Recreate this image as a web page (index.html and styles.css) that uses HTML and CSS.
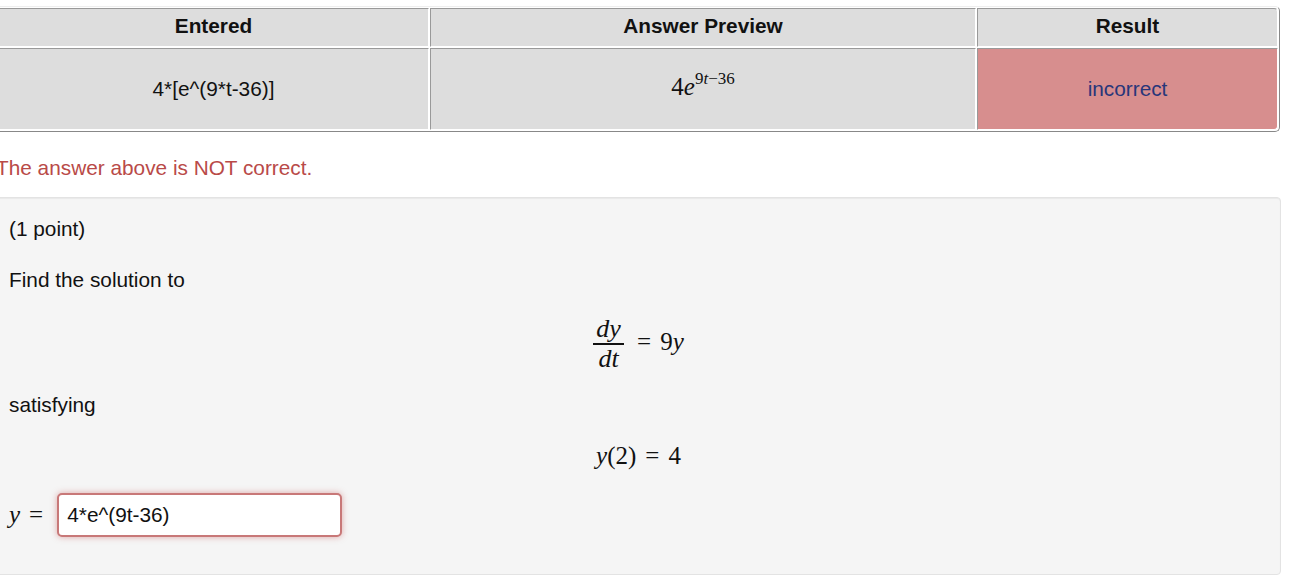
FILE: index.html
```html
<!DOCTYPE html>
<html lang="en">
<head>
	<meta charset="UTF-8">
	<title>Problem 4</title>
	<link rel="stylesheet" href="styles.css">
</head>
<body>
	<div class="page">
		<table class="attempt-results">
			<tr>
				<th class="col-entered">Entered</th>
				<th class="col-preview">Answer Preview</th>
				<th class="col-result">Result</th>
			</tr>
			<tr>
				<td>4*[e^(9*t-36)]</td>
				<td class="preview"><span class="math">4<i>e</i><sup>9<i>t</i>−36</sup></span></td>
				<td class="incorrect">incorrect</td>
			</tr>
		</table>

		<p class="error">The answer above is NOT correct.</p>

		<div class="problem">
			<p class="points">(1 point)</p>
			<p class="text">Find the solution to</p>
			<div class="display eq-first">
				<span class="math">
					<span class="frac"><span class="num"><i>dy</i></span><span class="den"><i>dt</i></span></span>
					<span class="rel">=</span>9<i>y</i>
				</span>
			</div>
			<p class="text after-eq">satisfying</p>
			<div class="display eq-second">
				<span class="math"><i>y</i>(2)<span class="rel">=</span>4</span>
			</div>
			<div class="answer-line">
				<span class="math"><i>y</i><span class="rel">=</span></span>
				<input type="text" class="answer" value="4*e^(9t-36)">
			</div>
		</div>
	</div>
</body>
</html>
```

FILE: styles.css
```css
body{margin:0;background:#fff;font-family:"Liberation Sans",Arial,sans-serif;font-size:20.8px;color:#111;}
.page{margin-left:-4px;width:1285px;padding-top:6px;}

/* results table */
.attempt-results{width:1284px;table-layout:fixed;border-collapse:separate;border-spacing:1px;border:1px solid;border-color:#eee #888 #888 #eee;border-radius:0 5px 5px 0;}
.attempt-results th,.attempt-results td{background:#ddd;text-align:center;border:1px solid;border-color:#999 #fff #fff #999;}
.attempt-results th{height:33px;padding:0 0 4px;font-weight:bold;}
.attempt-results td{height:80px;padding:0;}
.col-entered{width:429px;}
.col-preview{width:544px;}
.col-result{width:auto;}
.attempt-results td.incorrect{background:#d78e8e;color:#28367a;}
.attempt-results th.col-result{border-top-right-radius:4px;}
.attempt-results td.incorrect{border-bottom-right-radius:4px;}
.preview .math{position:relative;top:-2px;}

.error{margin:24px 0 0;line-height:24px;color:#b94a48;}

/* problem well */
.problem{margin-top:17px;background:#f5f5f5;border:1px solid #e3e3e3;border-radius:4px;box-shadow:inset 0 1px 1px rgba(0,0,0,.05);padding:19px 12px 37px 12px;}
.problem p{margin:0;line-height:24px;}
.points{margin:0;}
.text{margin-top:27px !important;}
.after-eq{margin-top:21px !important;}

.math{font-family:"Liberation Serif","Times New Roman",serif;font-size:25px;white-space:nowrap;}
.math i{font-style:italic;}
.math sup{font-size:17px;vertical-align:11px;line-height:0;}
.rel{margin:0 9px;}

.display{display:flex;justify-content:center;align-items:center;}
.eq-first{margin-top:24px;height:56px;}
.eq-second{margin-top:24px;height:30px;}

.frac{display:inline-flex;flex-direction:column;align-items:center;vertical-align:middle;margin-right:-2px;font-size:26px;}
.frac .num{line-height:26px;padding:0 3px 1px;border-bottom:2px solid #111;}
.frac .den{line-height:28px;padding:0 3px;}

.answer-line{margin-top:22px;display:flex;align-items:center;gap:8px;}
.answer-line .rel{margin-right:6px;}
.answer{box-sizing:border-box;width:285px;height:44px;padding:0 8px;border:2px solid #c87878;border-radius:5px;background:#fff;box-shadow:0 0 6px rgba(200,90,90,.5);font-family:"Liberation Sans",Arial,sans-serif;font-size:20.8px;color:#111;}
```
